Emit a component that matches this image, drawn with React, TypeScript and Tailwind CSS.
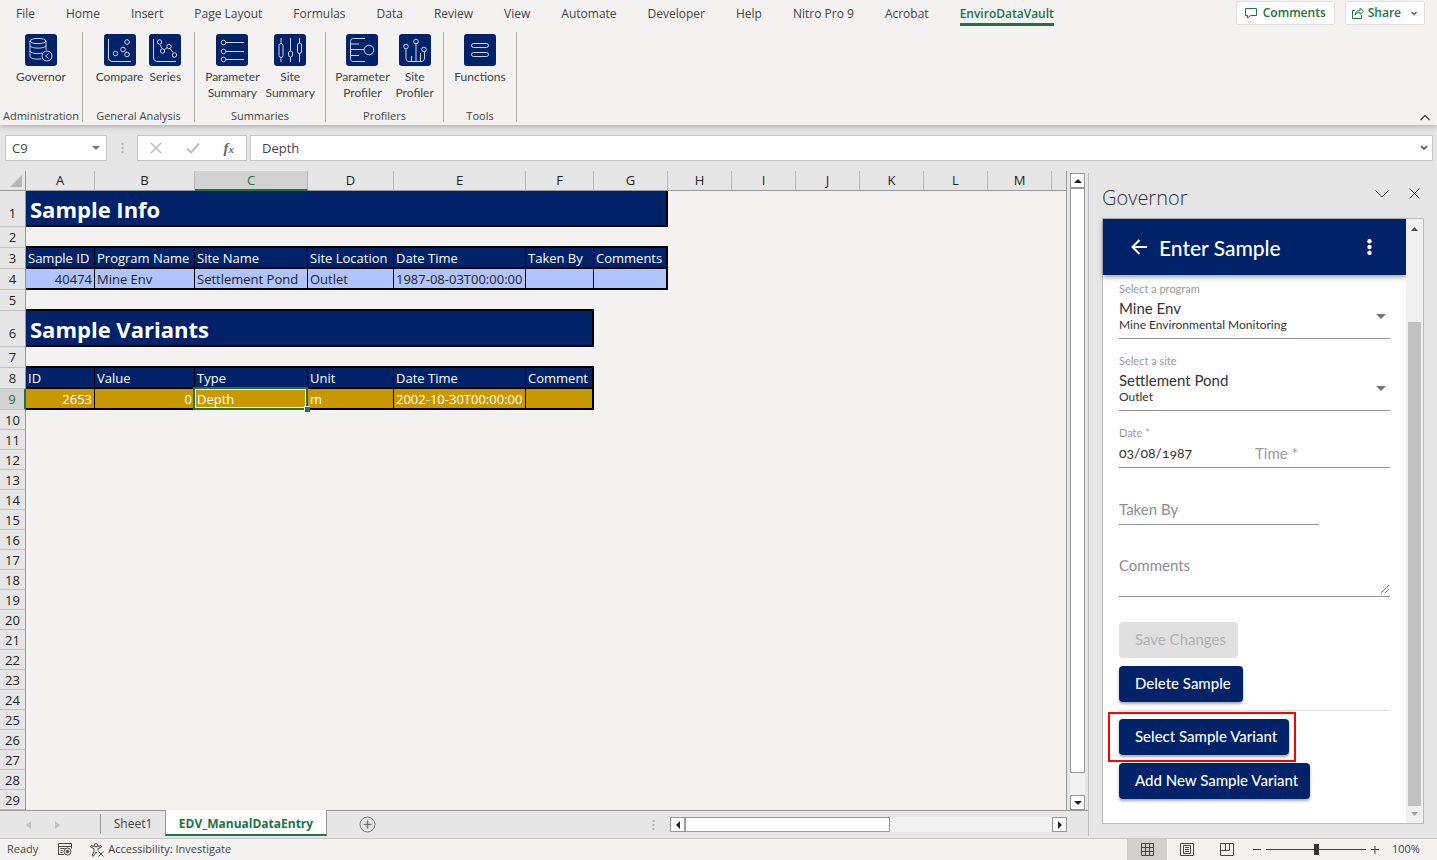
import { useState } from 'react'
import type { ReactNode } from 'react'
import { clsx } from 'clsx'

const MENU = [
  'File', 'Home', 'Insert', 'Page Layout', 'Formulas', 'Data', 'Review', 'View',
  'Automate', 'Developer', 'Help', 'Nitro Pro 9', 'Acrobat', 'EnviroDataVault',
]

function ToolIcon({ children }: { children: ReactNode }) {
  return (
    <svg className="h-8 w-8 shrink-0" viewBox="0 0 32 32" fill="none" stroke="#c9d4ee" strokeWidth="1" aria-hidden="true">
      <rect width="32" height="32" rx="3" fill="#002269" stroke="none" />
      {children}
    </svg>
  )
}

const icons = {
  governor: (
    <ToolIcon>
      <ellipse cx="13" cy="7" rx="8" ry="2.6" />
      <path d="M5 7v4.500c0 1.500 3.500 2.600 8 2.600s8-1.100 8-2.600V7M5 11.500v5.500c0 1.500 3.500 2.600 8 2.600 1.500 0 2.700-.1 4-.4M21 11.500v4.500M5 17v5.500c0 1.500 3.500 2.600 8 2.600 1.300 0 2.500-.1 3.500-.3" />
      <circle cx="22" cy="22" r="5" />
      <path d="M23.500 19.500 20.500 22l3 2.500" />
    </ToolIcon>
  ),
  compare: (
    <ToolIcon>
      <path d="M4.500 5v18c0 3 1.500 4.500 4.500 4.500h18" />
      <circle cx="23" cy="8" r="2.300" />
      <circle cx="11.500" cy="19.500" r="2.300" />
      <circle cx="19" cy="15.500" r="2.300" />
      <circle cx="23" cy="20.500" r="2.300" />
    </ToolIcon>
  ),
  series: (
    <ToolIcon>
      <path d="M4.500 5v18c0 3 1.500 4.500 4.500 4.500h18M11 10.500l2 4M15.500 15.500l3-2M21 14.500l3 4" />
      <circle cx="10.500" cy="8" r="2.200" />
      <circle cx="13.500" cy="17" r="2.200" />
      <circle cx="20" cy="12.500" r="2.200" />
      <circle cx="25.500" cy="21" r="2.200" />
    </ToolIcon>
  ),
  paramSummary: (
    <ToolIcon>
      <path d="M10 8.500h18M10 17.500h18M10 25.500h18" />
      <circle cx="7.500" cy="8.500" r="2.300" />
      <circle cx="7.500" cy="17.500" r="2.300" />
      <circle cx="7.500" cy="25.500" r="2.300" />
    </ToolIcon>
  ),
  siteSummary: (
    <ToolIcon>
      <path d="M7 4v6M7 23v5M16.500 4v13M16.500 23v5M25.500 4v5M25.500 19v9" />
      <rect x="5" y="9.500" width="4" height="14" rx="2" />
      <rect x="14.500" y="17" width="4" height="6" rx="2" />
      <rect x="23.500" y="9" width="4" height="10.500" rx="2" />
    </ToolIcon>
  ),
  paramProfiler: (
    <ToolIcon>
      <path d="M19 4.500H7.500c-2 0-3 1-3 3v17c0 2 1 3 3 3H19M4.500 10H13M4.500 15.500H18M4.500 21.500H13" />
      <circle cx="23" cy="16" r="4.800" />
    </ToolIcon>
  ),
  siteProfiler: (
    <ToolIcon>
      <path d="M7 15v9c0 2 1 3.500 3 3.500h12c2 0 3.500-1.500 3.500-3.500v-6M17 10v17.500M12.500 22v5.500M21.500 19v8.500" />
      <circle cx="7" cy="12.500" r="2.300" />
      <circle cx="17" cy="7.500" r="2.300" />
      <circle cx="25" cy="15.500" r="2.300" />
    </ToolIcon>
  ),
  functions: (
    <ToolIcon>
      <rect x="7.500" y="9.500" width="17" height="4" rx="2" />
      <rect x="7.500" y="18.500" width="17" height="4" rx="2" />
    </ToolIcon>
  ),
}

const GROUPS = [
  { name: 'Administration', width: 'w-[83px]', tools: [{ icon: icons.governor, lines: ['Governor'] }] },
  {
    name: 'General Analysis',
    width: 'w-[112px]',
    tools: [
      { icon: icons.compare, lines: ['Compare'] },
      { icon: icons.series, lines: ['Series'] },
    ],
  },
  {
    name: 'Summaries',
    width: 'w-[131px]',
    tools: [
      { icon: icons.paramSummary, lines: ['Parameter', 'Summary'] },
      { icon: icons.siteSummary, lines: ['Site', 'Summary'] },
    ],
  },
  {
    name: 'Profilers',
    width: 'w-[118px]',
    tools: [
      { icon: icons.paramProfiler, lines: ['Parameter', 'Profiler'] },
      { icon: icons.siteProfiler, lines: ['Site', 'Profiler'] },
    ],
  },
  { name: 'Tools', width: 'w-[73px]', tools: [{ icon: icons.functions, lines: ['Functions'] }] },
]

function Ribbon() {
  return (
    <header className="relative z-10 bg-[#f3f2f1] text-[#444444] shadow-[0_1px_6px_rgba(0,0,0,0.3)]">
      <div className="flex h-7 items-start justify-between pr-3 pl-4">
        <nav className="flex gap-[31px] text-xs leading-6">
          {MENU.map((item) => (
            <a
              key={item}
              href="#"
              className={clsx(
                'mt-[2px] h-6 whitespace-nowrap',
                item === 'EnviroDataVault' && 'border-b-3 border-[#217346] font-semibold text-[#217346]',
              )}
            >
              {item}
            </a>
          ))}
        </nav>
        <div className="flex gap-[10px] text-xs font-semibold text-[#217346]">
          <button className="mt-px flex h-6 items-center gap-[6px] rounded-xs border border-[#e1dfdd] bg-white px-2">
            <svg className="h-3 w-3" viewBox="0 0 12 12" fill="none" stroke="currentColor" aria-hidden="true">
              <path d="M.5 1.500h11v7h-6l-3 2.500v-2.500h-2z" />
            </svg>
            Comments
          </button>
          <button className="mt-px flex h-6 items-center gap-1 rounded-xs border border-[#e1dfdd] bg-white px-[6px]">
            <svg className="h-3 w-3" viewBox="0 0 12 12" fill="none" stroke="currentColor" aria-hidden="true">
              <path d="M3 3.500H.5v8h9V8M3 8c.3-3 2-4.500 5-4.500V1l3.500 3.500L8 7.500V5.500C5.500 5.500 4 6.500 3 8z" />
            </svg>
            Share
            <svg className="ml-[5px] h-2 w-2" viewBox="0 0 8 8" fill="none" stroke="currentColor" strokeWidth="1.300" aria-hidden="true">
              <path d="M1.500 3 4 5.500 6.500 3" />
            </svg>
          </button>
        </div>
      </div>

      <div className="flex items-end justify-between pt-1">
        <div className="flex">
          {GROUPS.map((group) => (
            <section key={group.name} className={clsx('flex h-[93px] flex-col items-center', group.width)}>
              <div className="flex h-[90px] w-full flex-col items-center justify-between border-r border-[#b3b0ad] pt-[2px]">
                <div className="flex gap-[6px]">
                  {group.tools.map((tool, i) => (
                    <button key={i} className="flex flex-col items-center font-[Lato,sans-serif] text-xs leading-4">
                      {tool.icon}
                      <span className="mt-[3px]">
                        {tool.lines.map((line) => (
                          <span key={line} className="block">{line}</span>
                        ))}
                      </span>
                    </button>
                  ))}
                </div>
                <h2 className="text-[11px] leading-3 whitespace-nowrap">{group.name}</h2>
              </div>
            </section>
          ))}
        </div>
        <button aria-label="Collapse the ribbon" className="mr-[6px] mb-[2px] p-px">
          <svg className="h-2 w-[10px]" viewBox="0 0 10 8" fill="none" stroke="currentColor" strokeWidth="1.300" aria-hidden="true">
            <path d="M.5 6 5 1.500 9.500 6" />
          </svg>
        </button>
      </div>
    </header>
  )
}

function Dots() {
  return (
    <svg className="h-3 w-[3px] shrink-0" viewBox="0 0 3 12" fill="#b0b0b0" aria-hidden="true">
      <path d="M.5 1h2v2h-2zM.5 5h2v2h-2zM.5 9h2v2h-2z" />
    </svg>
  )
}

function FormulaBar() {
  return (
    <div className="flex items-center px-1 pt-[10px] pb-[10px] text-[13px] text-[#444444]">
      <div className="ml-px flex h-[26px] w-[102px] items-center border border-[#c6c6c6] bg-white pr-[6px]">
        <input aria-label="Name box" defaultValue="C9" className="h-full w-full min-w-0 pl-[6px] outline-none" />
        <svg className="h-1 w-2 shrink-0" viewBox="0 0 8 4" fill="#767676" aria-hidden="true">
          <path d="M0 0h8L4 4z" />
        </svg>
      </div>
      <div className="flex w-[30px] justify-center"><Dots /></div>
      <div className="flex h-[26px] w-[110px] items-center justify-between border border-[#c6c6c6] bg-white px-3">
        <button aria-label="Cancel">
          <svg className="h-3 w-3" viewBox="0 0 12 12" stroke="#bdbdbd" strokeWidth="1.600" aria-hidden="true">
            <path d="M1 1l10 10M11 1 1 11" />
          </svg>
        </button>
        <button aria-label="Enter">
          <svg className="h-3 w-[14px]" viewBox="0 0 14 12" fill="none" stroke="#bdbdbd" strokeWidth="2" aria-hidden="true">
            <path d="M1 6.500l4 4L13 1.500" />
          </svg>
        </button>
        <button aria-label="Insert function" className="font-['Liberation_Serif',serif] text-[15px] leading-5 font-bold text-[#666666] italic">
          f<span className="text-[11px]">x</span>
        </button>
      </div>
      <div className="ml-[3px] flex h-[26px] min-w-0 flex-1 items-center border border-[#c6c6c6] bg-white pr-1">
        <input aria-label="Formula" defaultValue="Depth" className="h-full min-w-0 flex-1 pl-[11px] outline-none" />
        <svg className="h-2 w-2" viewBox="0 0 8 8" fill="none" stroke="#666666" strokeWidth="1.800" aria-hidden="true">
          <path d="M1 2l3 3 3-3" />
        </svg>
      </div>
    </div>
  )
}

const COLUMNS = [
  { name: 'A', width: 'w-[69px]' },
  { name: 'B', width: 'w-[100px]' },
  { name: 'C', width: 'w-[113px]' },
  { name: 'D', width: 'w-[86px]' },
  { name: 'E', width: 'w-[132px]' },
  { name: 'F', width: 'w-[68px]' },
  { name: 'G', width: 'w-[74px]' },
  { name: 'H', width: 'w-16' },
  { name: 'I', width: 'w-16' },
  { name: 'J', width: 'w-16' },
  { name: 'K', width: 'w-16' },
  { name: 'L', width: 'w-16' },
  { name: 'M', width: 'w-16' },
]

type Row = { kind: 'title' | 'head' | 'info' | 'variant' | 'gap'; span: number; cells: string[] }

const ROWS: Record<number, Row> = {
  1: { kind: 'title', span: 7, cells: ['Sample Info'] },
  2: { kind: 'gap', span: 7, cells: [] },
  3: {
    kind: 'head',
    span: 7,
    cells: ['Sample ID', 'Program Name', 'Site Name', 'Site Location', 'Date Time', 'Taken By', 'Comments'],
  },
  4: { kind: 'info', span: 7, cells: ['40474', 'Mine Env', 'Settlement Pond', 'Outlet', '1987-08-03T00:00:00', '', ''] },
  5: { kind: 'gap', span: 6, cells: [] },
  6: { kind: 'title', span: 6, cells: ['Sample Variants'] },
  7: { kind: 'gap', span: 6, cells: [] },
  8: { kind: 'head', span: 6, cells: ['ID', 'Value', 'Type', 'Unit', 'Date Time', 'Comment'] },
  9: { kind: 'variant', span: 6, cells: ['2653', '0', 'Depth', 'm', '2002-10-30T00:00:00', ''] },
}

const ROW_STYLE = {
  title: 'bg-[#002269] text-white',
  head: 'bg-[#002269] text-white',
  info: 'bg-[#b0c4ff] text-[#222222]',
  variant: 'bg-[#c99700] text-white',
  gap: '',
}

function SheetRow({ number }: { number: number }) {
  const row = ROWS[number]
  const selected = number === 9
  return (
    <tr className={clsx(!row ? 'h-5' : row.kind === 'title' ? 'h-9' : 'h-[21px]')}>
      <th
        scope="row"
        className={clsx(
          'border-b border-b-[#c0c0c0] p-0 text-center font-normal',
          selected
            ? 'border-r-2 border-r-[#217346] bg-[#d2d2d2] text-[#217346]'
            : 'border-r border-r-[#999999] bg-[#e6e6e6] text-[#222222]',
          row?.kind === 'title' && 'pt-2',
        )}
      >
        {number}
      </th>
      {!row && <td colSpan={14} className="p-0" />}
      {row && (row.kind === 'gap' || row.kind === 'title') && (
        <td
          colSpan={row.span}
          className={clsx(
            'border-b-2 border-black p-0',
            ROW_STYLE[row.kind],
            row.kind === 'title' && 'border-r-2 pt-px pl-1 text-[22px] leading-8 font-bold',
          )}
        >
          {row.cells[0]}
        </td>
      )}
      {row && row.kind !== 'gap' && row.kind !== 'title' &&
        row.cells.map((cell, i) => (
          <td
            key={i}
            className={clsx(
              'relative border-b-2 border-black p-0 px-[2px] whitespace-nowrap',
              ROW_STYLE[row.kind],
              i === row.span - 1 ? 'border-r-2' : 'border-r',
              /^\d+$/.test(cell) && 'text-right',
            )}
          >
            {cell}
            {selected && i === 2 && (
              <span className="absolute -top-[2px] -right-px -bottom-[2px] -left-[2px] z-10 border-2 border-[#217346] outline-1 -outline-offset-3 outline-white">
                <span className="absolute -right-1 -bottom-1 h-[6px] w-[6px] border-t border-l border-white bg-[#217346]" />
              </span>
            )}
          </td>
        ))}
      {row && <td colSpan={14 - row.span} className="p-0" />}
    </tr>
  )
}

function Sheet() {
  return (
    <div className="min-h-0 min-w-0 flex-1 overflow-hidden border-r border-[#999999] bg-[#f3f2f1]">
      <table className="w-full table-fixed border-separate border-spacing-0 text-[13px] leading-[18px]">
        <thead>
          <tr className="h-5 text-[#222222]">
            <th className="w-[26px] border-r border-b border-[#999999] bg-[#e6e6e6] p-0 pr-[3px] pb-[3px] align-bottom">
              <svg className="ml-auto h-3 w-3" viewBox="0 0 12 12" fill="#b5b5b5" role="img" aria-label="Select all">
                <path d="M12 0v12H0z" />
              </svg>
            </th>
            {COLUMNS.map((col) => (
              <th
                key={col.name}
                scope="col"
                className={clsx(
                  'border-r border-r-[#b5b5b5] p-0 text-center leading-4 font-normal',
                  col.width,
                  col.name === 'C'
                    ? 'border-b-2 border-b-[#217346] bg-[#d2d2d2] text-[#217346]'
                    : 'border-b border-b-[#999999] bg-[#e6e6e6] pb-px',
                )}
              >
                {col.name}
              </th>
            ))}
            <th className="border-b border-[#999999] bg-[#e6e6e6] p-0" />
          </tr>
        </thead>
        <tbody>
          {Array.from({ length: 29 }, (_, i) => (
            <SheetRow key={i + 1} number={i + 1} />
          ))}
        </tbody>
      </table>
    </div>
  )
}

function ScrollButton({ label, d }: { label: string; d: string }) {
  return (
    <button aria-label={label} className="flex h-[15px] w-[15px] shrink-0 items-center justify-center border border-[#999999] bg-white">
      <svg className="h-2 w-2" viewBox="0 0 8 8" fill="#222222" aria-hidden="true">
        <path d={d} />
      </svg>
    </button>
  )
}

function SheetTabs() {
  return (
    <div className="flex h-7 shrink-0 items-start border-t border-[#999999] text-xs text-[#444444]">
      <div className="flex h-7 w-[100px] items-center gap-6 pl-[26px]">
        <button aria-label="Previous sheet">
          <svg className="h-2 w-[5px]" viewBox="0 0 5 8" fill="#c0c0c0" aria-hidden="true"><path d="M5 0v8L0 4z" /></svg>
        </button>
        <button aria-label="Next sheet">
          <svg className="h-2 w-[5px]" viewBox="0 0 5 8" fill="#c0c0c0" aria-hidden="true"><path d="M0 0v8l5-4z" /></svg>
        </button>
      </div>
      <button className="mt-[3px] h-5 w-[65px] border-l border-[#999999] leading-5">Sheet1</button>
      <button className="-mt-px h-[26px] w-[162px] border-x border-b-2 border-x-[#999999] border-b-[#217346] bg-white pt-1 font-bold text-[#217346]">
        EDV_ManualDataEntry
      </button>
      <button aria-label="New sheet" className="mt-[5px] ml-8">
        <svg className="h-[17px] w-[17px]" viewBox="0 0 17 17" fill="none" stroke="#777777" aria-hidden="true">
          <circle cx="8.500" cy="8.500" r="7.500" />
          <path d="M8.500 4.500v8M4.500 8.500h8" strokeWidth="1.600" />
        </svg>
      </button>
      <div className="mt-[6px] ml-auto flex items-center pr-[21px]">
        <Dots />
        <div className="ml-[15px] flex w-[397px] bg-[#f2f2f2]">
          <ScrollButton label="Scroll left" d="M6 0v8L2 4z" />
          <div className="h-[15px] w-[205px] border border-[#999999] bg-white" />
          <div className="flex-1" />
          <ScrollButton label="Scroll right" d="M2 0v8l4-4z" />
        </div>
      </div>
    </div>
  )
}

function SelectField({ id, label, value, detail }: { id: string; label: string; value: string; detail: string }) {
  return (
    <div className="border-b border-[#949494] pb-[5px]">
      <label htmlFor={id} className="block text-[11px] leading-4 text-[#999999]">{label}</label>
      <div className="mt-[2px] flex items-center justify-between pr-1">
        <div className="min-w-0 flex-1">
          <select id={id} className="block h-[18px] w-full appearance-none text-[15px] leading-[18px] text-[#333333] outline-none">
            <option>{value}</option>
          </select>
          <p className="text-xs leading-4 text-[#333333]">{detail}</p>
        </div>
        <svg className="h-[5px] w-[10px]" viewBox="0 0 10 5" fill="#757575" aria-hidden="true"><path d="M0 0h10L5 5z" /></svg>
      </div>
    </div>
  )
}

const BUTTON = 'h-9 rounded-sm pr-3 pl-4 text-[15px]'
const PRIMARY = 'bg-[#002269] text-white font-medium shadow-[0_2px_3px_rgba(0,0,0,0.35)]'

function GovernorPane() {
  return (
    <aside className="mt-[2px] mb-[2px] flex w-[349px] shrink-0 flex-col border-l border-[#bcbcbc] pr-[13px] pb-3 pl-[13px] text-[#333333]">
      <div className="flex h-[45px] items-center justify-between pt-1">
        <h2 className="text-xl leading-7 font-light">Governor</h2>
        <div className="mb-2 flex items-center gap-5 pr-1">
          <button aria-label="Pane options">
            <svg className="h-2 w-[14px]" viewBox="0 0 14 8" fill="none" stroke="#444444" aria-hidden="true"><path d="M.5.500 7 7 13.500.500" /></svg>
          </button>
          <button aria-label="Close pane">
            <svg className="h-[11px] w-[11px]" viewBox="0 0 11 11" stroke="#333333" aria-hidden="true"><path d="M.5.500l10 10M10.500.500l-10 10" /></svg>
          </button>
        </div>
      </div>

      <div className="flex flex-1 border border-[#bcbcbc] bg-white font-[Lato,sans-serif]">
        <div className="min-w-0 flex-1">
          {/* App bar */}
          <div className="flex h-14 items-center bg-[#002269] pr-7 pl-7 text-white shadow-[0_2px_5px_rgba(0,0,0,0.4)]">
            <button aria-label="Back">
              <svg className="h-4 w-4" viewBox="0 0 16 16" fill="none" stroke="currentColor" strokeWidth="2" aria-hidden="true"><path d="M16 8H1.500M8.500 1 1.500 8l7 7" /></svg>
            </button>
            <h1 className="ml-3 pt-px text-[21px] font-medium">Enter Sample</h1>
            <button aria-label="More" className="ml-auto px-[6px]">
              <svg className="h-4 w-[5px]" viewBox="0 0 5 16" fill="currentColor" aria-hidden="true">
                <circle cx="2.500" cy="2.200" r="2.200" /><circle cx="2.500" cy="8" r="2.200" /><circle cx="2.500" cy="13.800" r="2.200" />
              </svg>
            </button>
          </div>

          <form className="px-4 pt-[6px]">
            <SelectField id="program" label="Select a program" value="Mine Env" detail="Mine Environmental Monitoring" />
            <div className="mt-[14px]">
              <SelectField id="site" label="Select a site" value="Settlement Pond" detail="Outlet" />
            </div>
            <div className="mt-[14px] flex items-end border-b border-[#949494] pb-[3px] text-[15px]">
              <div className="w-[136px]">
                <label htmlFor="date" className="block text-[11px] leading-4 text-[#999999]">Date *</label>
                <input id="date" defaultValue="03/08/1987" className="mt-px h-5 w-full text-sm oldstyle-nums outline-none" />
              </div>
              <input aria-label="Time" placeholder="Time *" className="h-5 w-[130px] outline-none placeholder:text-[#999999]" />
            </div>
            <input
              aria-label="Taken By"
              placeholder="Taken By"
              className="mt-8 block h-[25px] w-[200px] border-b border-[#949494] pb-[5px] text-[15px] outline-none placeholder:text-[#8c8c8c]"
            />
            <div className="relative mt-[30px]">
              <textarea
                aria-label="Comments"
                placeholder="Comments"
                className="block h-[42px] w-full resize-none border-b border-[#949494] text-[15px] leading-5 outline-none placeholder:text-[#8c8c8c]"
              />
              <svg className="absolute right-px bottom-1 h-2 w-2" viewBox="0 0 8 8" stroke="#555555" strokeWidth=".8" aria-hidden="true"><path d="M0 8l8-8M4 8l4-4" /></svg>
            </div>

            <div className="mt-[25px] flex flex-col items-start gap-2 border-b border-[#e0e0e0] pb-2">
              <button type="button" disabled className={clsx(BUTTON, 'bg-[#e0e0e0] text-[#b0b0b0]')}>Save Changes</button>
              <button type="button" className={clsx(BUTTON, PRIMARY)}>Delete Sample</button>
            </div>
            <div className="flex flex-col items-start gap-2 pt-2">
              <div className="relative">
                <button type="button" className={clsx(BUTTON, PRIMARY)}>Select Sample Variant</button>
                <span className="pointer-events-none absolute -inset-y-[7px] -right-[7px] -left-[11px] border-2 border-[#ff0000]" />
              </div>
              <button type="button" className={clsx(BUTTON, PRIMARY)}>Add New Sample Variant</button>
            </div>
          </form>
        </div>

        {/* Pane scrollbar */}
        <div className="flex w-[17px] flex-col items-center bg-[#f1f1f1]">
          <svg className="mt-[7px] h-[5px] w-[7px]" viewBox="0 0 7 5" fill="#505050" aria-hidden="true"><path d="M0 5l3.500-4L7 5z" /></svg>
          <div className="mt-[91px] w-[13px] flex-1 bg-[#c1c1c1]" />
          <svg className="my-[6px] h-[5px] w-[7px]" viewBox="0 0 7 5" fill="#a0a0a0" aria-hidden="true"><path d="M0 0h7L3.500 4z" /></svg>
        </div>
      </div>
    </aside>
  )
}

function StatusBar() {
  const [zoom, setZoom] = useState(50)
  return (
    <footer className="flex h-[22px] shrink-0 items-center border-t border-[#c6c6c6] bg-[#f3f2f1] pl-[7px] text-[11px] text-[#444444]">
      <span>Ready</span>
      <svg className="ml-5 h-[13px] w-[14px]" viewBox="0 0 14 13" fill="none" stroke="currentColor" aria-hidden="true">
        <path d="M6 11.500H.5V.5h13v5M.5 3.500h13M2.500 5.500h4M2.500 7.500h2M2.500 9.500h2" />
        <circle cx="9.500" cy="8.500" r="3.500" />
        <circle cx="9.500" cy="8.500" r="1.200" fill="currentColor" />
      </svg>
      <button className="ml-[18px] flex items-center gap-1">
        <svg className="h-[14px] w-[14px]" viewBox="0 0 14 14" fill="none" stroke="currentColor" aria-hidden="true">
          <circle cx="6" cy="2.200" r="1.700" />
          <path d="M4.500 3.500 1 2.500.5 4 4 5.500v3l-2 4 1.300.8L6 9l1 1.500M7.500 3.500 11 2.500l.5 1.500L8 5.500v2M8.500 8.500l5 5M13.500 8.500l-5 5" />
        </svg>
        Accessibility: Investigate
      </button>
      <div className="ml-auto flex h-full items-center">
        <button aria-label="Normal view" className="flex h-full w-10 items-center justify-center bg-[#d2d0ce]">
          <svg className="h-[13px] w-[13px]" viewBox="0 0 13 13" fill="none" stroke="currentColor" aria-hidden="true"><path d="M.5.500h12v12H.5zM4.500 0v13M8.500 0v13M0 4.500h13M0 8.500h13" /></svg>
        </button>
        <button aria-label="Page layout view" className="flex h-full w-10 items-center justify-center">
          <svg className="h-[13px] w-[14px]" viewBox="0 0 14 13" fill="none" stroke="currentColor" aria-hidden="true"><path d="M.5.500h13v12H.5zM3.500 2.500h7v8h-7zM5 4.500h4M5 6.500h4M5 8.500h4" /></svg>
        </button>
        <button aria-label="Page break view" className="flex h-full w-10 items-center justify-center">
          <svg className="h-[13px] w-[14px]" viewBox="0 0 14 13" fill="none" stroke="currentColor" aria-hidden="true"><path d="M.5.500h13v12H.5zM5.500.500v7M9.500.500v7M.5 7.500h9" /></svg>
        </button>
        <button aria-label="Zoom out" className="ml-[6px] h-2 w-2">
          <svg viewBox="0 0 8 8" stroke="currentColor" aria-hidden="true"><path d="M0 3.500h8" /></svg>
        </button>
        <input
          type="range"
          aria-label="Zoom"
          value={zoom}
          onChange={(e) => setZoom(Number(e.target.value))}
          className="mx-[5px] h-4 w-[100px] appearance-none bg-transparent [&::-webkit-slider-runnable-track]:h-px [&::-webkit-slider-runnable-track]:bg-[#444444] [&::-webkit-slider-thumb]:-mt-[5px] [&::-webkit-slider-thumb]:h-[11px] [&::-webkit-slider-thumb]:w-[5px] [&::-webkit-slider-thumb]:appearance-none [&::-webkit-slider-thumb]:bg-[#333333]"
        />
        <button aria-label="Zoom in" className="h-2 w-2">
          <svg viewBox="0 0 8 8" stroke="currentColor" aria-hidden="true"><path d="M0 3.500h8M4 0v8" /></svg>
        </button>
        <span className="w-[58px] pl-[13px]">100%</span>
      </div>
    </footer>
  )
}

export default function App() {
  return (
    <div className="flex min-h-screen flex-col bg-[#e6e6e6] font-['Open_Sans',sans-serif]">
      <Ribbon />
      <FormulaBar />
      <main className="flex flex-1">
        <div className="flex min-w-0 flex-1 flex-col">
          <div className="flex flex-1">
            <Sheet />
            <div className="mx-[3px] mt-[2px] flex w-[15px] flex-col bg-[#f2f2f2]">
              <ScrollButton label="Scroll up" d="M0 6h8L4 2z" />
              <div className="mb-[22px] flex-1 border border-[#999999] bg-white" />
              <ScrollButton label="Scroll down" d="M0 2h8L4 6z" />
            </div>
          </div>
          <SheetTabs />
        </div>
        <GovernorPane />
      </main>
      <StatusBar />
    </div>
  )
}
